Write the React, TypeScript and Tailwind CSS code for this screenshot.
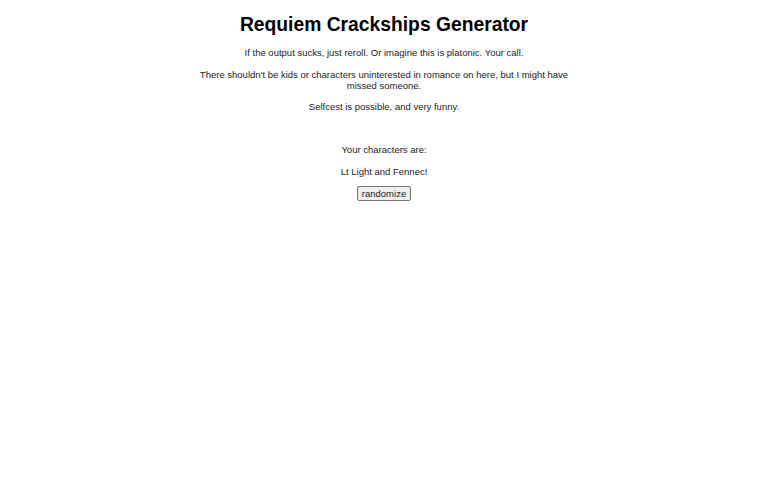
export default function App() {
  return (
    <div
      className="min-h-[480px] bg-white text-black flex flex-col items-center pt-[13px]"
      style={{ fontFamily: '"Liberation Sans", Arial, sans-serif' }}
    >
      <h1 className="text-[19.3px] leading-[23px] font-bold">Requiem Crackships Generator</h1>
      <div className="w-[390px] flex flex-col items-center text-center text-[9.5px] leading-[11px] text-[#222]">
        <p className="mt-[11px]">If the output sucks, just reroll. Or imagine this is platonic. Your call.</p>
        <p className="mt-[11px]">
          There shouldn't be kids or characters uninterested in romance on here, but I might have missed someone.
        </p>
        <p className="mt-[10px]">Selfcest is possible, and very funny.</p>
        <p className="mt-[32px]">Your characters are:</p>
        <p className="mt-[11px]">Lt Light and Fennec!</p>
        <button className="mt-[9px] px-[4px] h-[15px] leading-[13px] text-[9.5px] bg-[#efefef] border border-[#767676] rounded-[2px]">
          randomize
        </button>
      </div>
    </div>
  );
}
